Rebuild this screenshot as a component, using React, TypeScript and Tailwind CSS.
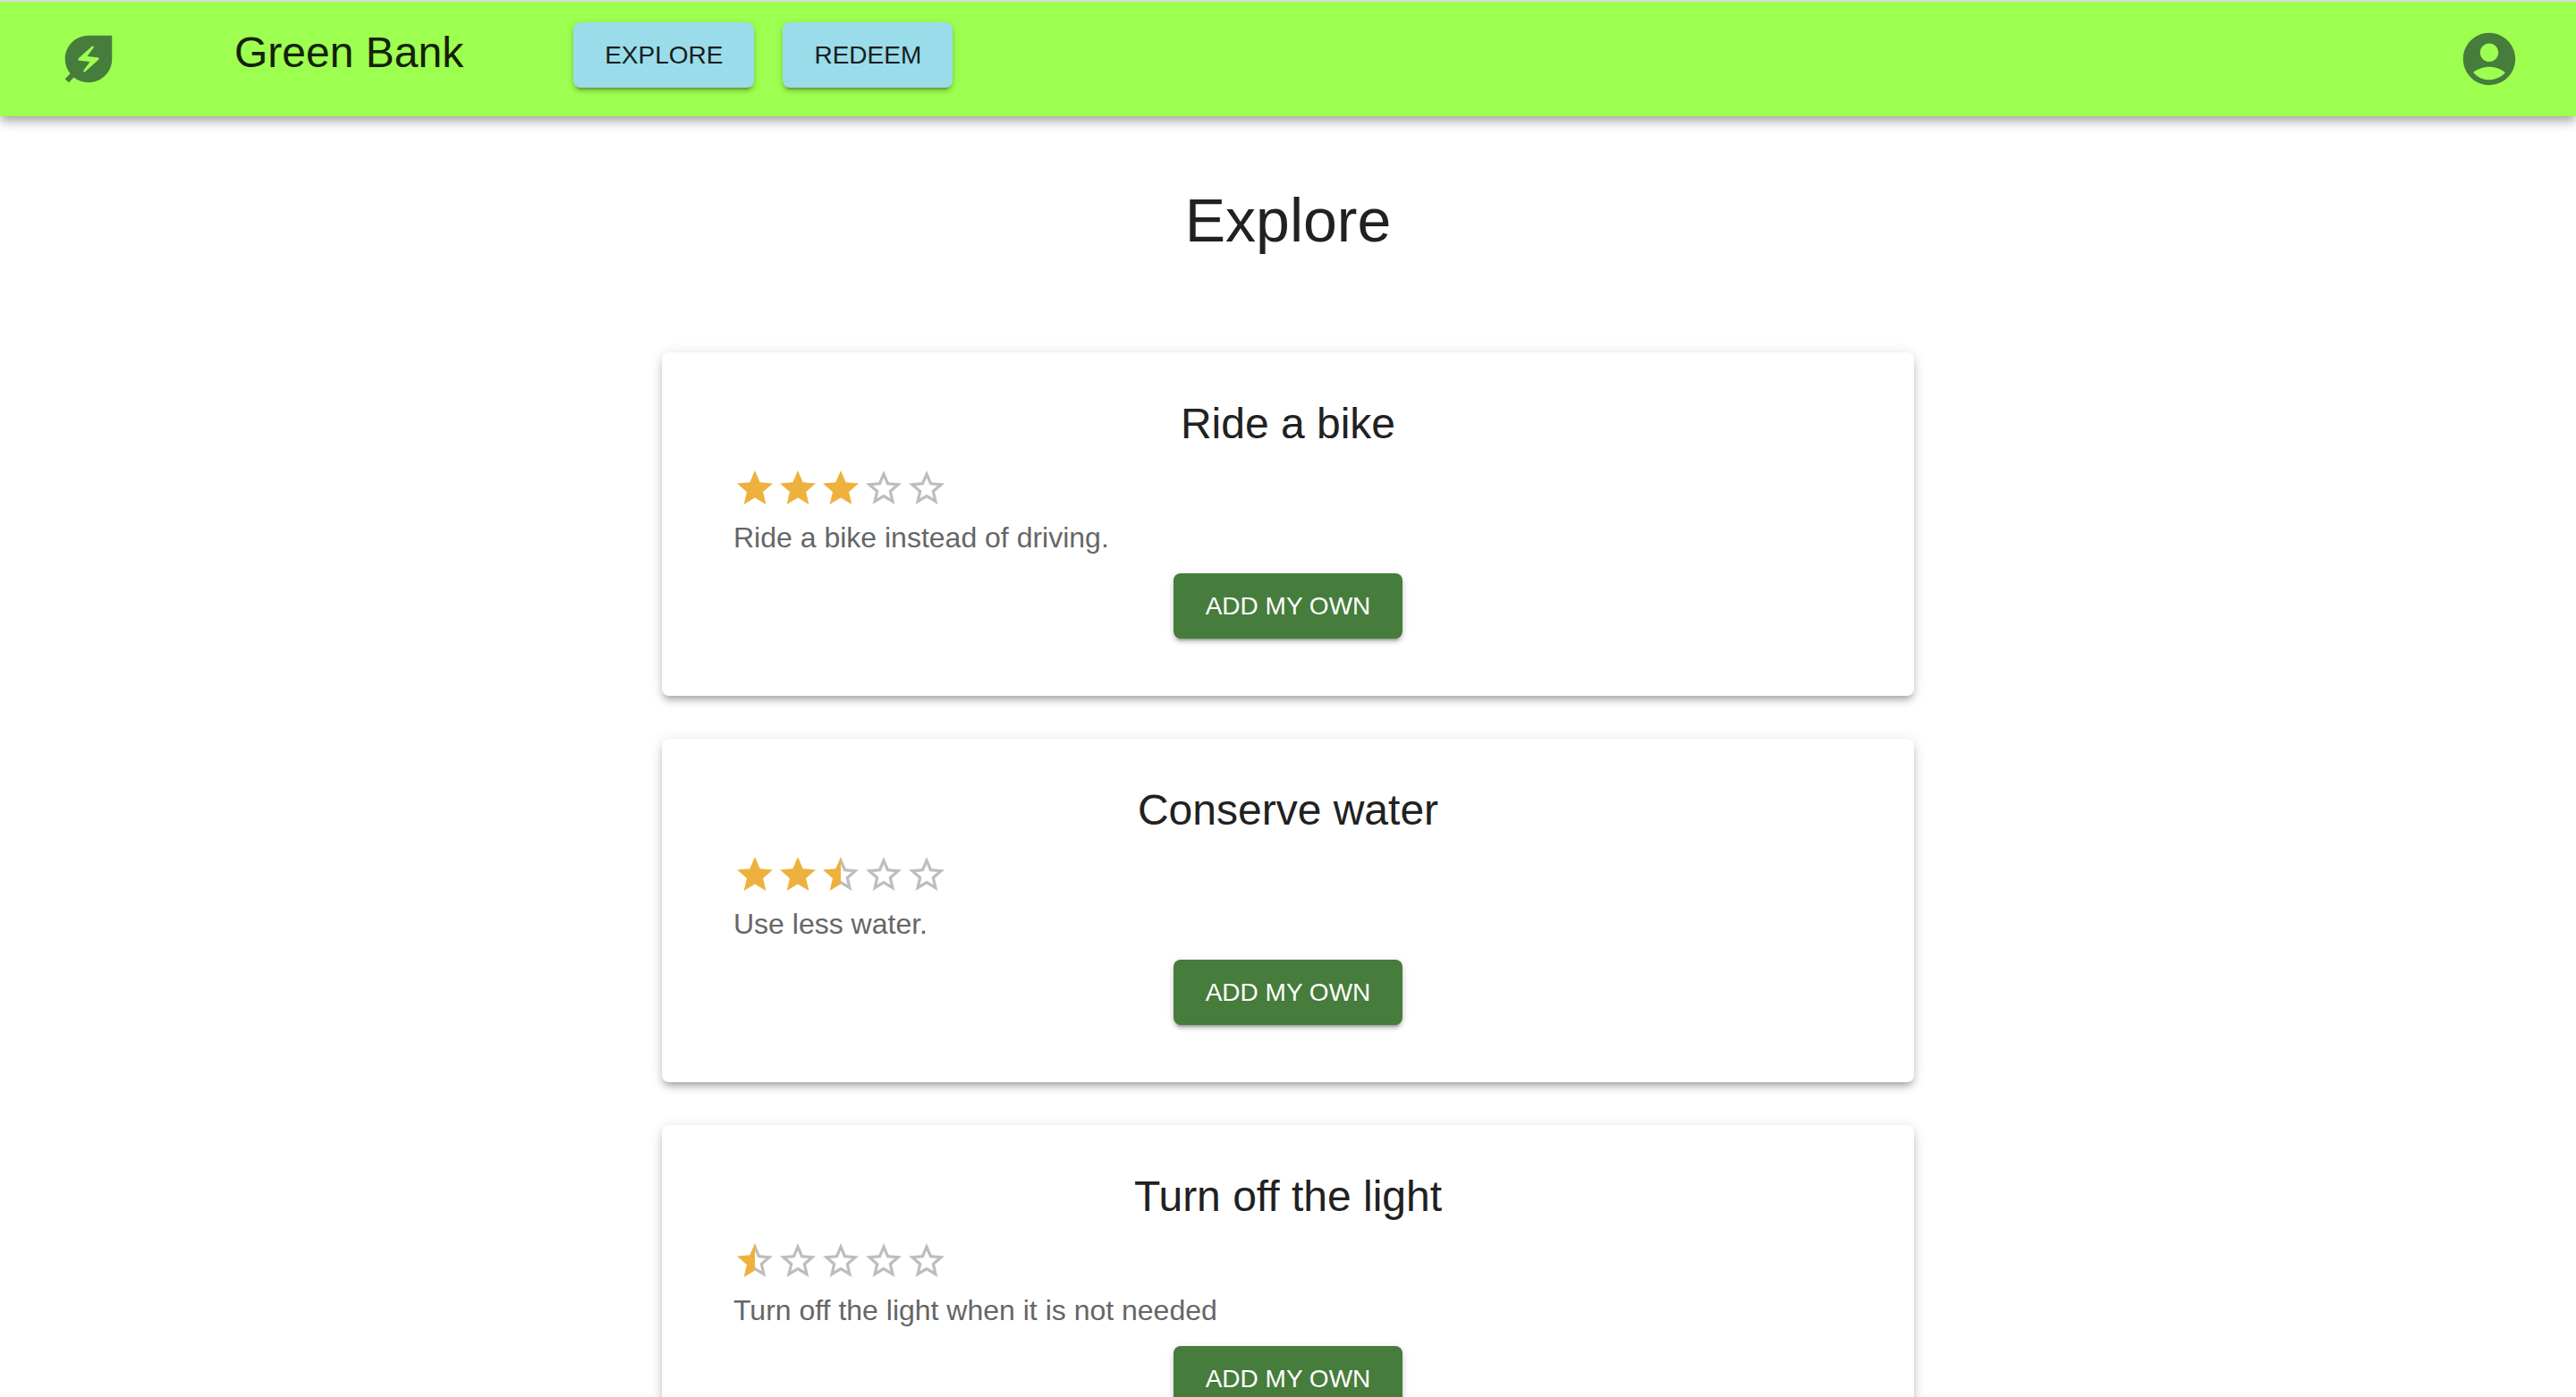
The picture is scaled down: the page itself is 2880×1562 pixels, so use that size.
type Activity = {
  title: string;
  rating: number;
  description: string;
};

const activities: Activity[] = [
  { title: "Ride a bike", rating: 3, description: "Ride a bike instead of driving." },
  { title: "Conserve water", rating: 2.5, description: "Use less water." },
  { title: "Turn off the light", rating: 0.5, description: "Turn off the light when it is not needed" },
];

const buttonShadow =
  "shadow-[0_6px_2px_-4px_rgba(0,0,0,0.2),0_4px_4px_0_rgba(0,0,0,0.14),0_2px_10px_0_rgba(0,0,0,0.12)]";

function LeafIcon() {
  return (
    <svg viewBox="0 0 24 24" className="size-[70px] fill-current" aria-hidden="true">
      <path d="M12 3c-4.8 0-9 3.86-9 9 0 2.12.74 4.07 1.97 5.61L3 19.59 4.41 21l1.97-1.97C7.93 20.26 9.88 21 12 21c2.3 0 4.61-.88 6.36-2.64C20.12 16.61 21 14.3 21 12V3h-9zm3.83 9.26-5.16 4.63c-.16.15-.41.14-.56-.01-.14-.14-.16-.36-.04-.52l2.44-3.33-4.05-.4c-.44-.04-.63-.59-.3-.89l5.16-4.63c.16-.15.41-.14.56.01.14.14.16.36.04.52l-2.44 3.33 4.05.4c.45.04.63.59.3.89z" />
    </svg>
  );
}

function AccountIcon() {
  return (
    <svg viewBox="0 0 24 24" className="size-[70px] fill-current" aria-hidden="true">
      <path d="M12 2C6.48 2 2 6.48 2 12s4.48 10 10 10 10-4.48 10-10S17.52 2 12 2zm0 4c1.93 0 3.5 1.57 3.5 3.5S13.93 13 12 13s-3.5-1.57-3.5-3.5S10.07 6 12 6zm0 14c-2.03 0-4.43-.82-6.14-2.88C7.55 15.8 9.68 15 12 15s4.45.8 6.14 2.12C16.43 19.18 14.03 20 12 20z" />
    </svg>
  );
}

const starPath =
  "M12 17.27 18.18 21l-1.64-7.03L22 9.24l-7.19-.61L12 2 9.19 8.63 2 9.24l5.46 4.73L5.82 21z";
const starBorderPath =
  "m22 9.24-7.19-.62L12 2 9.19 8.63 2 9.24l5.46 4.73L5.82 21 12 17.27 18.18 21l-1.63-7.03L22 9.24zM12 15.4l-3.76 2.27 1-4.28-3.32-2.88 4.38-.38L12 6.1l1.71 4.04 4.38.38-3.32 2.88 1 4.28L12 15.4z";
const halfStarPath = "M12 2 9.19 8.63 2 9.24l5.46 4.73L5.82 21 12 17.27z";
const halfBorderPath =
  "M12 2v4.1l1.71 4.04 4.38.38-3.32 2.88 1 4.28L12 15.4v1.87L18.18 21l-1.63-7.03L22 9.24l-7.19-.62z";

function Star({ fill }: { fill: number }) {
  return (
    <svg viewBox="0 0 24 24" className="size-12" aria-hidden="true">
      {fill >= 1 && <path className="fill-[#efb13e]" d={starPath} />}
      {fill > 0 && fill < 1 && (
        <>
          <path className="fill-[#bdbdbd]" d={halfBorderPath} />
          <path className="fill-[#efb13e]" d={halfStarPath} />
        </>
      )}
      {fill <= 0 && <path className="fill-[#bdbdbd]" d={starBorderPath} />}
    </svg>
  );
}

function Rating({ value }: { value: number }) {
  return (
    <div role="img" aria-label={`${value} Stars`} className="flex">
      {[0, 1, 2, 3, 4].map((i) => (
        <Star key={i} fill={value - i} />
      ))}
    </div>
  );
}

function NavButton({ label }: { label: string }) {
  return (
    <button
      type="button"
      className={`rounded-lg bg-[#9adce9] px-[35px] py-3 text-[28px] leading-[49px] text-[#151e20] uppercase ${buttonShadow}`}
    >
      {label}
    </button>
  );
}

function ActivityCard({ title, rating, description }: Activity) {
  return (
    <article className="flex flex-col rounded-lg bg-white px-20 pt-12 pb-16 shadow-[0_6px_6px_-4px_rgba(0,0,0,0.2),0_6px_8px_0_rgba(0,0,0,0.14),0_2px_16px_0_rgba(0,0,0,0.12)]">
      <h2 className="mb-4 text-center text-[48px] leading-[64px]">{title}</h2>
      <Rating value={rating} />
      <p className="mt-[7px] text-[32px] leading-[48px] text-[#666666]">{description}</p>
      <button
        type="button"
        className={`mt-4 min-w-64 self-center rounded-lg bg-[#467c3c] px-8 py-3 text-[28px] leading-[49px] text-white uppercase ${buttonShadow}`}
      >
        Add my own
      </button>
    </article>
  );
}

export default function App() {
  return (
    <div className="min-h-screen bg-white font-['Liberation_Sans',Arial,sans-serif] text-[#212121]">
      <header className="flex items-start border-t-2 border-[#dcdcdc] bg-[#9dff4f] pt-[23px] pr-[62px] pb-[29px] pl-16 shadow-[0_4px_8px_-2px_rgba(0,0,0,0.2),0_8px_10px_0_rgba(0,0,0,0.14),0_2px_20px_0_rgba(0,0,0,0.12)]">
        <a href="#home" aria-label="Home" className="mt-[6px] text-[#467c3c]">
          <LeafIcon />
        </a>
        <div className="ml-32 text-[48px] leading-[68px] text-[#14210a]">Green Bank</div>
        <nav className="ml-[123px] flex gap-8">
          <NavButton label="Explore" />
          <NavButton label="Redeem" />
        </nav>
        <button type="button" aria-label="Account" className="mt-[6px] ml-auto text-[#467c3c]">
          <AccountIcon />
        </button>
      </header>
      <main className="px-8 pb-12">
        <h1 className="pt-[74px] text-center text-[68px] leading-[84px]">Explore</h1>
        <section aria-label="Activities" className="mx-auto mt-[106px] flex max-w-[1400px] flex-col gap-12">
          {activities.map((activity) => (
            <ActivityCard key={activity.title} {...activity} />
          ))}
        </section>
      </main>
    </div>
  );
}
